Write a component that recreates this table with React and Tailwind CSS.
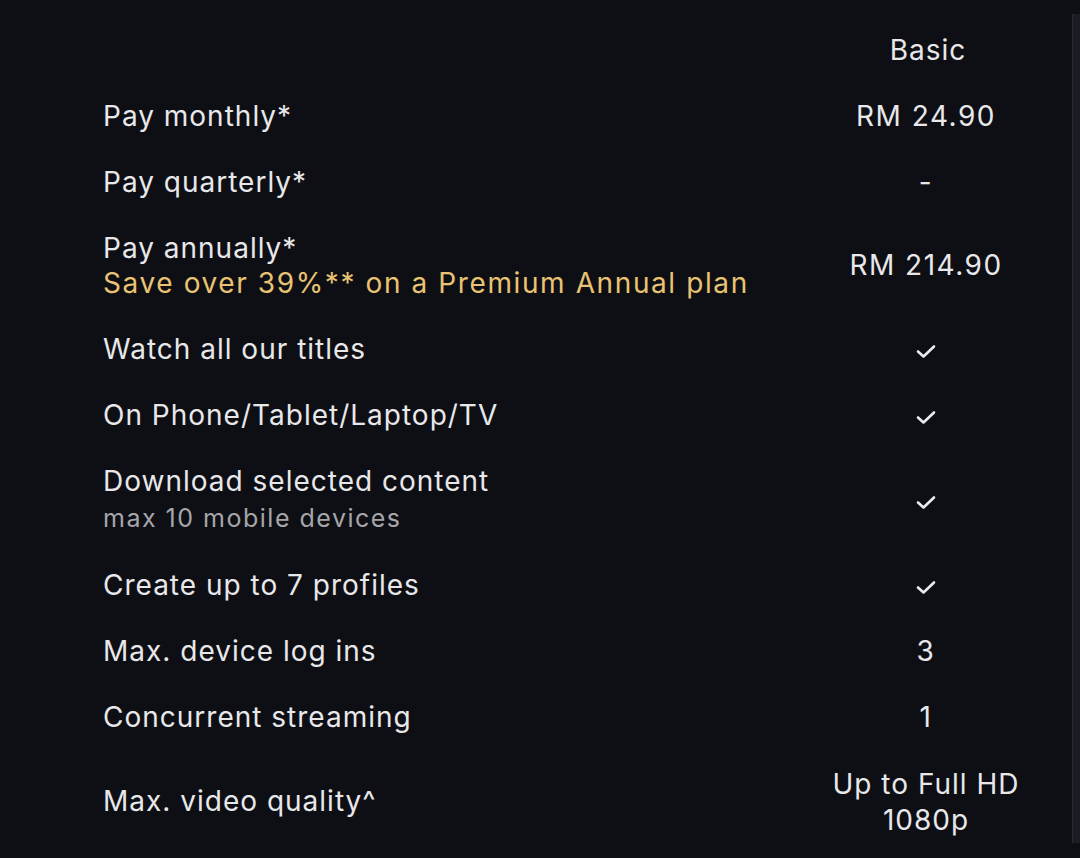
import React from "react";

const Check = () => (
  <svg width="22" height="18" viewBox="0 0 22 18" className="inline-block">
    <polyline points="3,9.5 8.5,14.5 19,4.5" fill="none" stroke="#ececec" strokeWidth="2.6" strokeLinecap="round" strokeLinejoin="round" />
  </svg>
);

const rows = [
  { label: "Pay monthly*", value: "RM 24.90" },
  { label: "Pay quarterly*", value: "-" },
  { label: "Pay annually*", gold: "Save over 39%** on a Premium Annual plan", value: "RM 214.90" },
  { label: "Watch all our titles", value: "check" },
  { label: "On Phone/Tablet/Laptop/TV", value: "check" },
  { label: "Download selected content", sub: "max 10 mobile devices", value: "check" },
  { label: "Create up to 7 profiles", value: "check" },
  { label: "Max. device log ins", value: "3" },
  { label: "Concurrent streaming", value: "1" },
  { label: "Max. video quality^", value: ["Up to Full HD", "1080p"] },
];

export default function App() {
  return (
    <div
      className="w-[1080px] h-[858px] bg-[#0e0f14] text-[#e8e8ea] flex overflow-hidden"
      style={{ fontFamily: "Inter, 'Noto Sans', sans-serif" }}
    >
      <div className="flex-1 flex flex-col pt-[17px]">
        <div className="flex items-center py-[15.5px] leading-[35px] text-[28px] tracking-[1px]">
          <div className="flex-1" />
          <div className="w-[200px] text-center pl-[4px]">Basic</div>
        </div>
        {rows.map((r, i) => (
          <div key={i} className="flex items-center py-[15.5px] text-[28px] leading-[35px]">
            <div className="flex-1 pl-[103px] tracking-[1px]">
              <div>{r.label}</div>
              {r.gold && <div className="text-[#e8c373] tracking-[1.6px]">{r.gold}</div>}
              {r.sub && (
                <div className="text-[25px] leading-[37px] pt-[1px] text-[#a6a6aa] tracking-[1.5px]">{r.sub}</div>
              )}
            </div>
            <div className="w-[200px] text-center tracking-[1.5px]">
              {r.value === "check" ? (
                <Check />
              ) : Array.isArray(r.value) ? (
                r.value.map((v) => (
                  <div key={v} className="leading-[36px] tracking-[1px]">
                    {v}
                  </div>
                ))
              ) : (
                r.value
              )}
            </div>
          </div>
        ))}
      </div>
      <div className="w-[46px]" />
      <div className="w-[8px] mt-[14px] mb-[15px] bg-[#1b1c24] border-l border-[#2a2b33]" />
    </div>
  );
}
